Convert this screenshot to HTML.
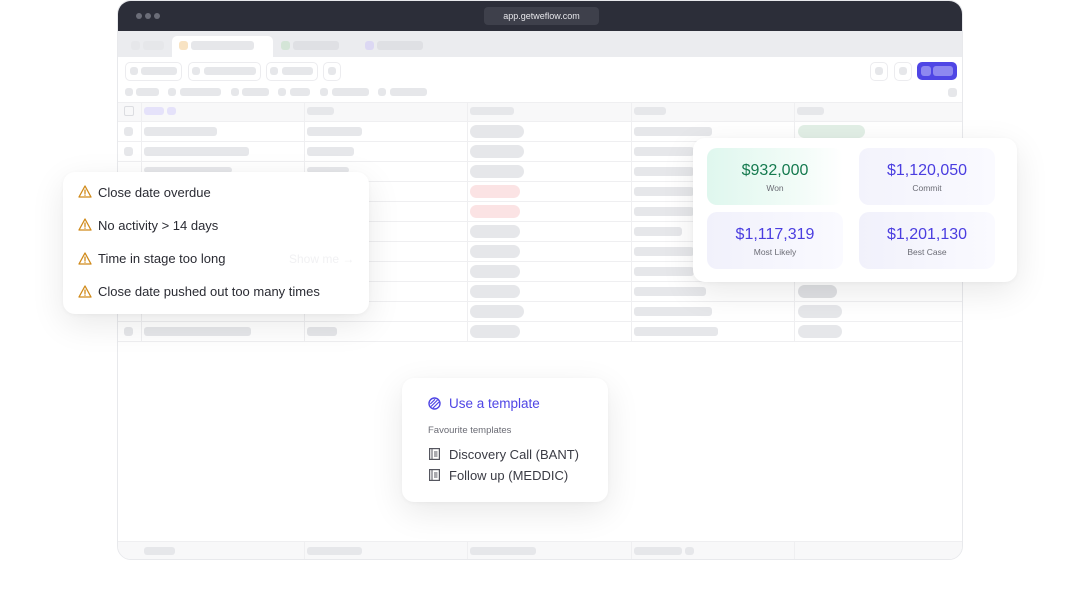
<!DOCTYPE html>
<html><head><meta charset="utf-8"><style>
*{box-sizing:border-box;margin:0;padding:0}
body{width:1080px;height:592px;background:#fff;position:relative;overflow:hidden;font-family:"Liberation Sans",sans-serif}
.a{position:absolute}
.b{position:absolute;background:#e6e7ea;border-radius:3px}
.win{left:117px;top:0;width:846px;height:560px;border-radius:14px;overflow:hidden;border:1px solid #e8e9ec;background:#fff}
.title{left:0;top:0;width:846px;height:30px;background:#2c2e39}
.dot{width:6px;height:6px;border-radius:3px;background:#6b6d78;top:12px}
.url{left:366px;top:6px;width:115px;height:18px;background:#3e404b;border-radius:4px;color:#e6e6ea;font-size:9px;text-align:center;line-height:18px}
.tabs{left:0;top:30px;width:846px;height:26px;background:#ebecef}
.btn{border:1px solid #ececef;border-radius:5px;height:19px;background:#fff}
.row{position:absolute;left:0;width:846px;height:20px;border-bottom:1px solid #efeff1}
.vl{position:absolute;top:101px;height:240px;width:1px;background:#efeff1}
.card{position:absolute;background:#fff;border-radius:12px;box-shadow:0 10px 34px rgba(0,0,0,.09),0 1px 4px rgba(0,0,0,.04)}
.al{position:absolute;left:35px;font-size:13px;color:#2a2b33}
.ic{position:absolute;left:15px}
.tile{position:absolute;width:136px;height:57px;border-radius:10px;text-align:center}
.num{font-size:16px;margin-top:14px;color:#4a3de0}
.lab{font-size:8.5px;color:#6b6c75;margin-top:3px}
</style></head><body>
<div class="a win">
 <div class="a title"></div>
 <div class="a dot" style="left:18px"></div><div class="a dot" style="left:27px"></div><div class="a dot" style="left:36px"></div>
 <div class="a url">app.getweflow.com</div>
 <div class="a tabs"></div>
 <div class="b" style="left:13px;top:40px;width:9px;height:9px"></div><div class="b" style="left:25px;top:40px;width:21px;height:9px"></div>
 <div class="a" style="left:54px;top:35px;width:101px;height:21px;background:#fff;border-radius:5px 5px 0 0"></div>
 <div class="b" style="left:61px;top:40px;width:9px;height:9px;background:#f8e3c3"></div><div class="b" style="left:73px;top:40px;width:63px;height:9px"></div>
 <div class="b" style="left:163px;top:40px;width:9px;height:9px;background:#d4e5d7"></div><div class="b" style="left:175px;top:40px;width:46px;height:9px;background:#dfe0e4"></div>
 <div class="b" style="left:247px;top:40px;width:9px;height:9px;background:#dcd8f3"></div><div class="b" style="left:259px;top:40px;width:46px;height:9px;background:#dfe0e4"></div>
 <div class="a btn" style="left:7px;top:61px;width:57px"></div><div class="b" style="left:12px;top:66px;width:8px;height:8px"></div><div class="b" style="left:23px;top:66px;width:36px;height:8px"></div>
 <div class="a btn" style="left:70px;top:61px;width:73px"></div><div class="b" style="left:74px;top:66px;width:8px;height:8px"></div><div class="b" style="left:86px;top:66px;width:52px;height:8px"></div>
 <div class="a btn" style="left:148px;top:61px;width:52px"></div><div class="b" style="left:152px;top:66px;width:8px;height:8px"></div><div class="b" style="left:164px;top:66px;width:31px;height:8px"></div>
 <div class="a btn" style="left:205px;top:61px;width:18px"></div><div class="b" style="left:210px;top:66px;width:8px;height:8px"></div>
 <div class="a btn" style="left:752px;top:61px;width:18px"></div><div class="b" style="left:757px;top:66px;width:8px;height:8px"></div>
 <div class="a btn" style="left:776px;top:61px;width:18px"></div><div class="b" style="left:781px;top:66px;width:8px;height:8px"></div>
 <div class="a" style="left:799px;top:61px;width:40px;height:18px;background:#4f46e5;border-radius:5px"></div>
 <div class="b" style="left:803px;top:65px;width:10px;height:10px;background:#8e88f0"></div><div class="b" style="left:815px;top:65px;width:20px;height:10px;background:#8e88f0"></div>
 <div class="b" style="left:7px;top:87px;width:8px;height:8px"></div><div class="b" style="left:18px;top:87px;width:23px;height:8px"></div>
 <div class="b" style="left:50px;top:87px;width:8px;height:8px"></div><div class="b" style="left:62px;top:87px;width:41px;height:8px"></div>
 <div class="b" style="left:113px;top:87px;width:8px;height:8px"></div><div class="b" style="left:124px;top:87px;width:27px;height:8px"></div>
 <div class="b" style="left:160px;top:87px;width:8px;height:8px"></div><div class="b" style="left:172px;top:87px;width:20px;height:8px"></div>
 <div class="b" style="left:202px;top:87px;width:8px;height:8px"></div><div class="b" style="left:214px;top:87px;width:37px;height:8px"></div>
 <div class="b" style="left:260px;top:87px;width:8px;height:8px"></div><div class="b" style="left:272px;top:87px;width:37px;height:8px"></div>
 <div class="b" style="left:830px;top:87px;width:9px;height:9px"></div>
 <div class="row" style="top:101px;background:#f8f8f9;border-top:1px solid #efeff1"></div>
 <div class="a" style="left:6px;top:105px;width:10px;height:10px;border:1px solid #dcdde1;border-radius:2px"></div>
 <div class="b" style="left:26px;top:106px;width:20px;height:8px;background:#e5e2fa"></div><div class="b" style="left:49px;top:106px;width:9px;height:8px;background:#e5e2fa"></div>
 <div class="b" style="left:189px;top:106px;width:27px;height:8px"></div><div class="b" style="left:352px;top:106px;width:44px;height:8px"></div><div class="b" style="left:516px;top:106px;width:32px;height:8px"></div><div class="b" style="left:679px;top:106px;width:27px;height:8px"></div>
 <div class="vl" style="left:23px"></div><div class="vl" style="left:186px"></div><div class="vl" style="left:349px"></div><div class="vl" style="left:513px"></div><div class="vl" style="left:676px"></div>
 <div class="row" style="top:121px"></div><div class="row" style="top:141px"></div><div class="row" style="top:161px"></div><div class="row" style="top:181px"></div><div class="row" style="top:201px"></div><div class="row" style="top:221px"></div><div class="row" style="top:241px"></div><div class="row" style="top:261px"></div><div class="row" style="top:281px"></div><div class="row" style="top:301px"></div><div class="row" style="top:321px"></div>
 <div class="b" style="left:6px;top:126px;width:9px;height:9px"></div><div class="b" style="left:26px;top:126px;width:73px;height:9px"></div><div class="b" style="left:189px;top:126px;width:55px;height:9px"></div><div class="b" style="left:352px;top:124px;width:54px;height:13px;border-radius:7px"></div><div class="b" style="left:516px;top:126px;width:78px;height:9px"></div><div class="b" style="left:680px;top:124px;width:67px;height:13px;border-radius:7px;background:#e2efe6"></div>
 <div class="b" style="left:6px;top:146px;width:9px;height:9px"></div><div class="b" style="left:26px;top:146px;width:105px;height:9px"></div><div class="b" style="left:189px;top:146px;width:47px;height:9px"></div><div class="b" style="left:352px;top:144px;width:54px;height:13px;border-radius:7px"></div><div class="b" style="left:516px;top:146px;width:60px;height:9px"></div>
 <div class="b" style="left:26px;top:166px;width:88px;height:6px"></div><div class="b" style="left:189px;top:166px;width:42px;height:6px"></div><div class="b" style="left:352px;top:164px;width:54px;height:13px;border-radius:7px"></div><div class="b" style="left:516px;top:166px;width:60px;height:9px"></div>
 <div class="b" style="left:352px;top:184px;width:50px;height:13px;border-radius:7px;background:#fbe3e4"></div><div class="b" style="left:516px;top:186px;width:60px;height:9px"></div>
 <div class="b" style="left:352px;top:204px;width:50px;height:13px;border-radius:7px;background:#fbe3e4"></div><div class="b" style="left:516px;top:206px;width:60px;height:9px"></div>
 <div class="b" style="left:352px;top:224px;width:50px;height:13px;border-radius:7px"></div><div class="b" style="left:516px;top:226px;width:48px;height:9px"></div>
 <div class="b" style="left:352px;top:244px;width:50px;height:13px;border-radius:7px"></div><div class="b" style="left:516px;top:246px;width:60px;height:9px"></div>
 <div class="b" style="left:352px;top:264px;width:50px;height:13px;border-radius:7px"></div><div class="b" style="left:516px;top:266px;width:60px;height:9px"></div>
 <div class="b" style="left:352px;top:284px;width:50px;height:13px;border-radius:7px"></div><div class="b" style="left:516px;top:286px;width:72px;height:9px"></div><div class="b" style="left:680px;top:284px;width:39px;height:13px;border-radius:7px;background:#dfe0e3"></div>
 <div class="b" style="left:352px;top:304px;width:54px;height:13px;border-radius:7px"></div><div class="b" style="left:516px;top:306px;width:78px;height:9px"></div><div class="b" style="left:680px;top:304px;width:44px;height:13px;border-radius:7px"></div>
 <div class="b" style="left:6px;top:326px;width:9px;height:9px"></div><div class="b" style="left:26px;top:326px;width:107px;height:9px"></div><div class="b" style="left:189px;top:326px;width:30px;height:9px"></div><div class="b" style="left:352px;top:324px;width:50px;height:13px;border-radius:7px"></div><div class="b" style="left:516px;top:326px;width:84px;height:9px"></div><div class="b" style="left:680px;top:324px;width:44px;height:13px;border-radius:7px"></div>
 <div class="a" style="left:0;top:540px;width:846px;height:20px;background:#f8f8f9;border-top:1px solid #efeff1"></div>
 <div class="vl" style="left:186px;top:540px;height:20px"></div><div class="vl" style="left:349px;top:540px;height:20px"></div><div class="vl" style="left:513px;top:540px;height:20px"></div><div class="vl" style="left:676px;top:540px;height:20px"></div>
 <div class="b" style="left:26px;top:546px;width:31px;height:8px"></div><div class="b" style="left:189px;top:546px;width:55px;height:8px"></div><div class="b" style="left:352px;top:546px;width:66px;height:8px"></div><div class="b" style="left:516px;top:546px;width:48px;height:8px"></div><div class="b" style="left:567px;top:546px;width:9px;height:8px"></div>
</div>

<div class="card" style="left:63px;top:172px;width:306px;height:142px">
 <svg class="ic" style="top:13px" width="14" height="13" viewBox="0 0 14 13"><path d="M7 1L13 12H1Z" fill="none" stroke="#d08a1a" stroke-width="1.3" stroke-linejoin="round"/><path d="M7 5v3.5M7 10v.3" stroke="#d08a1a" stroke-width="1.3" stroke-linecap="round"/></svg>
 <div class="al" style="top:13px">Close date overdue</div>
 <svg class="ic" style="top:46px" width="14" height="13" viewBox="0 0 14 13"><path d="M7 1L13 12H1Z" fill="none" stroke="#d08a1a" stroke-width="1.3" stroke-linejoin="round"/><path d="M7 5v3.5M7 10v.3" stroke="#d08a1a" stroke-width="1.3" stroke-linecap="round"/></svg>
 <div class="al" style="top:46px">No activity &gt; 14 days</div>
 <svg class="ic" style="top:80px" width="14" height="13" viewBox="0 0 14 13"><path d="M7 1L13 12H1Z" fill="none" stroke="#d08a1a" stroke-width="1.3" stroke-linejoin="round"/><path d="M7 5v3.5M7 10v.3" stroke="#d08a1a" stroke-width="1.3" stroke-linecap="round"/></svg>
 <div class="al" style="top:79px">Time in stage too long</div>
 <div class="a" style="left:226px;top:80px;font-size:12px;color:#f1f1f3">Show me →</div>
 <svg class="ic" style="top:113px" width="14" height="13" viewBox="0 0 14 13"><path d="M7 1L13 12H1Z" fill="none" stroke="#d08a1a" stroke-width="1.3" stroke-linejoin="round"/><path d="M7 5v3.5M7 10v.3" stroke="#d08a1a" stroke-width="1.3" stroke-linecap="round"/></svg>
 <div class="al" style="top:112px">Close date pushed out too many times</div>
</div>

<div class="card" style="left:693px;top:138px;width:324px;height:144px">
 <div class="tile" style="left:14px;top:10px;background:linear-gradient(90deg,#dff7ee,#f3fcf8 70%,#fff)"><div class="num" style="color:#157a4f">$932,000</div><div class="lab">Won</div></div>
 <div class="tile" style="left:166px;top:10px;background:linear-gradient(90deg,#f3f3fc,#fafaff)"><div class="num">$1,120,050</div><div class="lab">Commit</div></div>
 <div class="tile" style="left:14px;top:74px;background:linear-gradient(90deg,#f1f1fb,#fafaff)"><div class="num">$1,117,319</div><div class="lab">Most Likely</div></div>
 <div class="tile" style="left:166px;top:74px;background:linear-gradient(90deg,#f1f1fb,#fafaff)"><div class="num">$1,201,130</div><div class="lab">Best Case</div></div>
</div>

<div class="card" style="left:402px;top:378px;width:206px;height:124px">
 <svg class="a" style="left:26px;top:19px" width="13" height="13" viewBox="0 0 13 13"><circle cx="6.5" cy="6.5" r="5.5" fill="none" stroke="#4f46e5" stroke-width="1.4"/><path d="M3 9.5L9.5 3M5 11L11 5M2.3 7L7 2.3" stroke="#4f46e5" stroke-width="1.2"/></svg>
 <div class="a" style="left:47px;top:18px;font-size:13.5px;color:#4f46e5">Use a template</div>
 <div class="a" style="left:26px;top:47px;font-size:9.5px;color:#6b6c75">Favourite templates</div>
 <svg class="a" style="left:27px;top:70px" width="11" height="12" viewBox="0 0 11 12"><rect x=".6" y=".6" width="9.8" height="10.8" fill="none" stroke="#55565f" stroke-width="1.2"/><path d="M3 1v10M5 4h3.5M5 6h3.5M5 8h3.5" stroke="#55565f" stroke-width="1"/></svg>
 <div class="a" style="left:47px;top:69px;font-size:13px;color:#3a3b44">Discovery Call (BANT)</div>
 <svg class="a" style="left:27px;top:91px" width="11" height="12" viewBox="0 0 11 12"><rect x=".6" y=".6" width="9.8" height="10.8" fill="none" stroke="#55565f" stroke-width="1.2"/><path d="M3 1v10M5 4h3.5M5 6h3.5M5 8h3.5" stroke="#55565f" stroke-width="1"/></svg>
 <div class="a" style="left:47px;top:90px;font-size:13px;color:#3a3b44">Follow up (MEDDIC)</div>
</div>
</body></html>
